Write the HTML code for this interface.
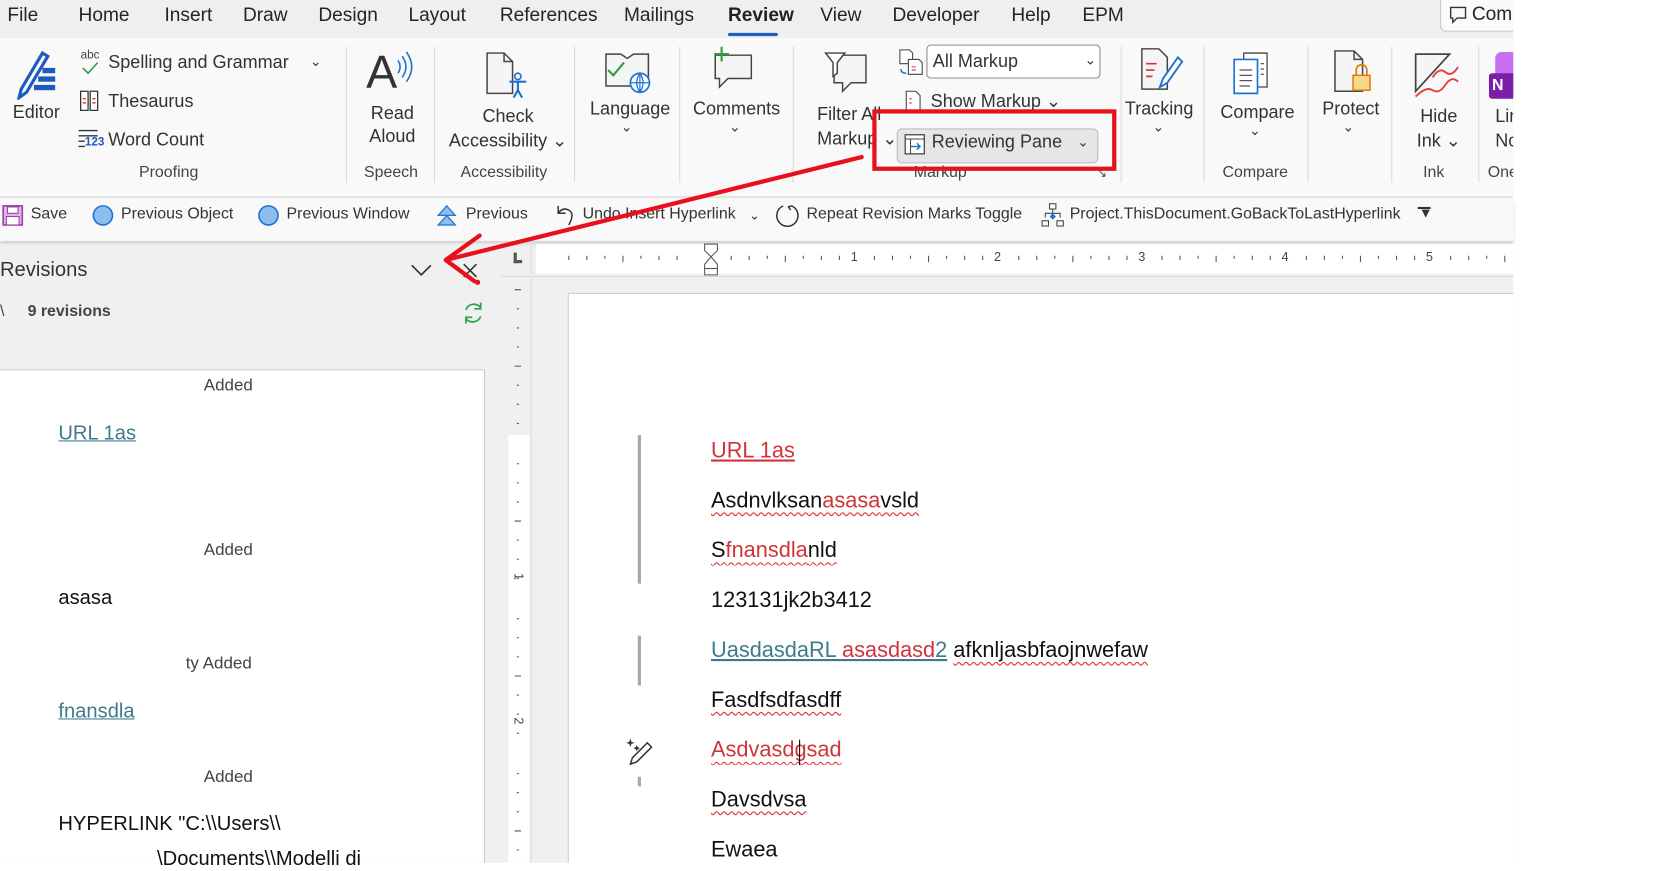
<!DOCTYPE html>
<html><head><meta charset="utf-8">
<style>
*{box-sizing:border-box;margin:0;padding:0}
body{width:1664px;height:862px;position:relative;overflow:hidden;background:#fff;font-family:"Liberation Sans",sans-serif;color:#242424}
#w{position:absolute;left:0;top:0;width:1568px;height:813px;transform:scale(1.0612);transform-origin:0 0}
.a{position:absolute;white-space:nowrap}
.tab{font-size:18px;top:4px;color:#242424}
.lbl{font-size:16px;color:#333}
.gl{font-size:15px;color:#444;top:154px}
.sep{position:absolute;top:44px;width:1px;height:128px;background:#dadada}
.q{font-size:15px;top:193px;color:#333}
.doc{font-size:20.5px;color:#111}
.red{color:#d13438}
.ul{text-decoration:underline}
.wv{text-decoration:underline wavy #e03030;text-decoration-thickness:1px;text-underline-offset:4px}
</style></head><body><div id="w">
<div class="a" style="left:0;top:0;width:1426px;height:813px;background:#f0f0f0"></div>
<!-- tab bar -->
<div class="a" style="left:0;top:0;width:1426px;height:36px;background:#efefef"></div>
<div class="a tab" style="left:7px">File</div>
<div class="a tab" style="left:74px">Home</div>
<div class="a tab" style="left:155px">Insert</div>
<div class="a tab" style="left:229px">Draw</div>
<div class="a tab" style="left:300px">Design</div>
<div class="a tab" style="left:385px">Layout</div>
<div class="a tab" style="left:471px">References</div>
<div class="a tab" style="left:588px">Mailings</div>
<div class="a tab" style="left:686px;font-weight:bold;color:#222">Review</div>
<div class="a" style="left:686px;top:31px;width:47px;height:3px;background:#1f5fbf;border-radius:2px"></div>
<div class="a tab" style="left:773px">View</div>
<div class="a tab" style="left:841px">Developer</div>
<div class="a tab" style="left:953px">Help</div>
<div class="a tab" style="left:1020px">EPM</div>
<div class="a" style="left:1357px;top:0;width:69px;height:30px;border:1px solid #c6c6c6;border-top:none;border-right:none;border-radius:0 0 0 6px;background:#fafafa"></div>
<svg class="a" style="left:1364px;top:4px" width="20" height="20"><path d="M3 3h14v10H9l-4 4v-4H3z" fill="none" stroke="#333" stroke-width="1.3"/></svg>
<div class="a" style="left:1387px;top:3px;font-size:18px;width:39px;overflow:hidden">Comm</div>
<!-- ribbon -->
<div class="a" style="left:0;top:36px;width:1426px;height:150px;background:#f9f9f9;border-bottom:1px solid #d8d8d8"></div>
<svg class="a" style="left:10px;top:46px" width="50" height="48"><path d="M30 4l-20 34-2 8 7-5 20-34z" fill="#fff" stroke="#1e5bbf" stroke-width="3"/><rect x="30" y="18" width="12" height="5" fill="#1e5bbf"/><rect x="26" y="26" width="16" height="5" fill="#1e5bbf"/><rect x="22" y="34" width="20" height="5" fill="#1e5bbf"/></svg>
<div class="a lbl" style="left:12px;top:96px;font-size:17px">Editor</div>
<div class="a" style="left:76px;top:46px;font-size:11px;color:#444">abc</div>
<svg class="a" style="left:76px;top:57px" width="18" height="14"><path d="M2 7l5 5 9-10" fill="none" stroke="#2e9e44" stroke-width="1.5"/></svg>
<div class="a lbl" style="left:102px;top:49px;font-size:17px">Spelling and Grammar</div>
<div class="a lbl" style="left:292px;top:50px;font-size:13px">&#8964;</div>
<svg class="a" style="left:74px;top:84px" width="20" height="22"><path d="M2 2h7v18H2zM11 2h7v18h-7z" fill="#fff" stroke="#333" stroke-width="1.2"/><path d="M4 9h3M13 9h3M4 13h3M13 13h3" stroke="#d33" stroke-width="1.3"/></svg>
<div class="a lbl" style="left:102px;top:86px;font-size:17px">Thesaurus</div>
<svg class="a" style="left:72px;top:121px" width="26" height="22"><path d="M2 2h18M2 7h18M2 12h6M2 17h6" stroke="#333" stroke-width="1.3"/></svg>
<div class="a" style="left:80px;top:128px;font-size:11px;color:#1e5bbf;font-weight:bold">123</div>
<div class="a lbl" style="left:102px;top:122px;font-size:17px">Word Count</div>
<div class="a gl" style="left:131px">Proofing</div>
<div class="sep" style="left:326px"></div>
<div class="a" style="left:345px;top:44px;font-size:44px;color:#333">A</div>
<svg class="a" style="left:372px;top:48px" width="18" height="30"><path d="M3 9q4 6 0 12M7 5q7 10 0 20M11 1q10 14 0 28" fill="none" stroke="#1e73d2" stroke-width="1.5"/></svg>
<div class="a lbl" style="left:348px;top:96px;font-size:17px;text-align:center;line-height:22px">Read<br>Aloud</div>
<div class="a gl" style="left:343px">Speech</div>
<div class="sep" style="left:409px"></div>
<svg class="a" style="left:456px;top:48px" width="44" height="46"><path d="M3 2h16l8 8v30H3z" fill="#f5f5f5" stroke="#444" stroke-width="1.4"/><path d="M19 2v8h8" fill="none" stroke="#444" stroke-width="1.4"/><circle cx="32" cy="24" r="3" fill="none" stroke="#1e73d2" stroke-width="1.5"/><path d="M24 29h16M32 29v8l-4 7M32 37l4 7" fill="none" stroke="#1e73d2" stroke-width="2"/></svg>
<div class="a lbl" style="left:423px;top:98px;font-size:17px;text-align:center;line-height:23px">Check<br>Accessibility &#8964;</div>
<div class="a gl" style="left:434px">Accessibility</div>
<div class="sep" style="left:541px"></div>
<svg class="a" style="left:568px;top:48px" width="48" height="44"><path d="M3 3h14l6 4 6-4h14v30H3z" fill="#f5f5f5" stroke="#444" stroke-width="1.4"/><path d="M5 18l5 5 10-12" fill="none" stroke="#2e9e44" stroke-width="2"/><circle cx="35" cy="30" r="9" fill="#fff" stroke="#1e73d2" stroke-width="1.6"/><path d="M26 30h18M35 21v18M35 21q-6 9 0 18q6-9 0-18" fill="none" stroke="#1e73d2" stroke-width="1.2"/></svg>
<div class="a lbl" style="left:556px;top:93px;font-size:17px">Language</div>
<div class="a lbl" style="left:585px;top:112px;font-size:13px">&#8964;</div>
<div class="sep" style="left:640px"></div>
<svg class="a" style="left:668px;top:42px" width="48" height="44"><path d="M6 10h34v22H18l-8 8v-8H6z" fill="#f5f5f5" stroke="#444" stroke-width="1.4"/><path d="M12 2v14M5 9h14" stroke="#2e9e44" stroke-width="2"/></svg>
<div class="a lbl" style="left:653px;top:93px;font-size:17px">Comments</div>
<div class="a lbl" style="left:687px;top:112px;font-size:13px">&#8964;</div>
<div class="sep" style="left:747px"></div>
<svg class="a" style="left:776px;top:44px" width="48" height="46"><path d="M10 8h30v26H26l-8 8v-8h-8z" fill="#f5f5f5" stroke="#444" stroke-width="1.4"/><path d="M2 6h18l-7 9v10l-4 3V15z" fill="#fff" stroke="#444" stroke-width="1.4"/></svg>
<div class="a lbl" style="left:770px;top:96px;font-size:17px;line-height:23px">Filter All<br>Markup &#8964;</div>
<svg class="a" style="left:846px;top:45px" width="26" height="28"><path d="M2 2h9l3 3v10H2z" fill="#fff" stroke="#444" stroke-width="1"/><path d="M10 11h10l3 3v11H10z" fill="#fff" stroke="#444" stroke-width="1"/><path d="M13 18h4M13 21h4" stroke="#d33"/><path d="M3 20q0 4 5 4" fill="none" stroke="#1e73d2" stroke-width="1.4"/></svg>
<div class="a" style="left:873px;top:42px;width:164px;height:32px;border:1px solid #8a8a8a;border-radius:4px;background:#fff"></div>
<div class="a lbl" style="left:879px;top:48px;font-size:17px">All Markup</div>
<div class="a lbl" style="left:1022px;top:49px;font-size:13px">&#8964;</div>
<svg class="a" style="left:852px;top:84px" width="18" height="22"><path d="M2 2h9l4 4v14H2z" fill="#fff" stroke="#444" stroke-width="1"/><path d="M5 9h2M5 13h2" stroke="#d33" stroke-width="1.3"/></svg>
<div class="a lbl" style="left:877px;top:86px;font-size:17px">Show Markup &#8964;</div>
<div class="a" style="left:845px;top:121px;width:190px;height:33px;background:#e6e6e6;border:1px solid #bdbdbd;border-radius:5px"></div>
<svg class="a" style="left:851px;top:125px" width="22" height="22"><rect x="2" y="2" width="18" height="18" fill="#fff" stroke="#444" stroke-width="1.2"/><path d="M2 6h18M7 6v14" stroke="#444" stroke-width="1"/><path d="M7 13h9M13 10l3 3-3 3" fill="none" stroke="#1e73d2" stroke-width="1.4"/></svg>
<div class="a lbl" style="left:878px;top:124px;font-size:17px">Reviewing Pane</div>
<div class="a lbl" style="left:1015px;top:126px;font-size:13px">&#8964;</div>
<div class="a gl" style="left:861px;top:154px">Markup</div>
<div class="a" style="left:1034px;top:157px;font-size:11px;color:#444">&#8600;</div>
<div class="sep" style="left:1056px"></div>
<svg class="a" style="left:1072px;top:44px" width="46" height="46"><path d="M4 2h16l8 8v30H4z" fill="#f5f5f5" stroke="#444" stroke-width="1.4"/><path d="M8 16h10M8 22h8M8 28h6" stroke="#d33" stroke-width="1.6"/><path d="M38 10l-14 20-3 8 7-4 14-20z" fill="#fff" stroke="#1e73d2" stroke-width="1.8"/></svg>
<div class="a lbl" style="left:1060px;top:93px;font-size:17px">Tracking</div>
<div class="a lbl" style="left:1086px;top:112px;font-size:13px">&#8964;</div>
<div class="sep" style="left:1134px"></div>
<svg class="a" style="left:1160px;top:48px" width="46" height="44"><path d="M12 2h22v32H12z" fill="#fff" stroke="#444" stroke-width="1.2"/><path d="M3 8h22v32H3z" fill="#fff" stroke="#1e73d2" stroke-width="1.6"/><path d="M8 18h12M8 23h12M8 28h12M8 33h10M28 12h3M28 17h3M28 22h3" stroke="#555" stroke-width="1.2"/></svg>
<div class="a lbl" style="left:1150px;top:96px;font-size:17px">Compare</div>
<div class="a lbl" style="left:1177px;top:115px;font-size:13px">&#8964;</div>
<div class="a gl" style="left:1152px">Compare</div>
<div class="sep" style="left:1232px"></div>
<svg class="a" style="left:1255px;top:45px" width="46" height="50"><path d="M3 3h18l8 8v30H3z" fill="#f5f5f5" stroke="#444" stroke-width="1.4"/><path d="M21 3v8h8" fill="none" stroke="#444" stroke-width="1.4"/><path d="M23 26v-5a5 5 0 0 1 10 0v5" fill="none" stroke="#e07b00" stroke-width="1.6"/><rect x="20" y="26" width="16" height="14" fill="#f7d88a" stroke="#e07b00" stroke-width="1.4"/></svg>
<div class="a lbl" style="left:1246px;top:93px;font-size:17px">Protect</div>
<div class="a lbl" style="left:1265px;top:112px;font-size:13px">&#8964;</div>
<div class="sep" style="left:1311px"></div>
<svg class="a" style="left:1330px;top:48px" width="48" height="46"><path d="M4 3h32L4 38z" fill="#f5f5f5" stroke="#444" stroke-width="1.6"/><path d="M20 25q6-10 12-5t12-5M4 43q10-10 16-6t12-5t12-3" fill="none" stroke="#e84040" stroke-width="1.8"/></svg>
<div class="a lbl" style="left:1335px;top:98px;font-size:17px;line-height:23px;text-align:center">Hide<br>Ink &#8964;</div>
<div class="a gl" style="left:1341px">Ink</div>
<div class="sep" style="left:1393px"></div>
<div class="a" style="left:1403px;top:49px;width:23px;height:46px;overflow:hidden"><div style="position:absolute;left:6px;top:0;width:30px;height:40px;background:#c76ff0;border-radius:6px"></div><div style="position:absolute;left:0;top:20px;width:26px;height:24px;background:#7a1fa8;border-radius:3px;color:#fff;font-weight:bold;font-size:15px;padding:3px 0 0 3px">N</div></div>
<div class="a lbl" style="left:1409px;top:98px;font-size:17px;line-height:23px;width:17px;overflow:hidden">Lin<br>No</div>
<div class="a gl" style="left:1402px;width:24px;overflow:hidden">One</div>
<!-- QAT -->
<div class="a" style="left:0;top:187px;width:1426px;height:40px;background:#f9f9f9;box-shadow:0 3px 4px rgba(0,0,0,.12)"></div>
<svg class="a" style="left:1px;top:192px" width="22" height="22"><rect x="2" y="2" width="18" height="18" fill="#e3b6e8" stroke="#9b3fa6" stroke-width="1.5"/><rect x="6" y="3" width="10" height="6" fill="#fff" stroke="#9b3fa6"/><rect x="5" y="12" width="12" height="8" fill="#fff" stroke="#9b3fa6"/></svg>
<div class="a q" style="left:29px">Save</div>
<svg class="a" style="left:86px;top:192px" width="22" height="22"><circle cx="11" cy="11" r="9" fill="#8cbef0" stroke="#1e73d2" stroke-width="1.5"/></svg>
<div class="a q" style="left:114px">Previous Object</div>
<svg class="a" style="left:242px;top:192px" width="22" height="22"><circle cx="11" cy="11" r="9" fill="#8cbef0" stroke="#1e73d2" stroke-width="1.5"/></svg>
<div class="a q" style="left:270px">Previous Window</div>
<svg class="a" style="left:410px;top:192px" width="22" height="22"><path d="M11 2l8 9H3zM11 11l8 9H3z" fill="#8cbef0" stroke="#1e73d2" stroke-width="1.2"/></svg>
<div class="a q" style="left:439px">Previous</div>
<svg class="a" style="left:520px;top:191px" width="24" height="24"><path d="M6 3v7h7M6 10q4-6 10-3t0 14" fill="none" stroke="#333" stroke-width="1.4"/></svg>
<div class="a q" style="left:549px">Undo Insert Hyperlink</div>
<div class="a q" style="left:706px;font-size:12px;top:196px">&#8964;</div>
<svg class="a" style="left:729px;top:190px" width="26" height="26"><path d="M9 4a10 10 0 1 0 8 0M17 4l-3 1 2 3" fill="none" stroke="#333" stroke-width="1.4"/></svg>
<div class="a q" style="left:760px">Repeat Revision Marks Toggle</div>
<svg class="a" style="left:980px;top:191px" width="24" height="24"><rect x="9" y="1" width="6" height="5" fill="none" stroke="#444"/><path d="M12 6v4M5 14v-4h14v4M12 10v3" stroke="#444" fill="none"/><path d="M12 10l3 3-3 3-3-3z" fill="#1e73d2"/><rect x="2" y="17" width="6" height="5" fill="none" stroke="#444"/><rect x="16" y="17" width="6" height="5" fill="none" stroke="#444"/></svg>
<div class="a q" style="left:1008px">Project.ThisDocument.GoBackToLastHyperlink</div>
<div class="a" style="left:1337px;top:193px;font-size:13px;color:#333">&#9660;</div>
<div class="a" style="left:1336px;top:195px;width:12px;height:1.5px;background:#333"></div>
<!-- revisions pane -->
<div class="a" style="left:0;top:230px;width:472px;height:583px;background:#f0f0f0"></div>
<div class="a" style="left:0;top:244px;font-size:19px;color:#333">Revisions</div>
<svg class="a" style="left:386px;top:248px" width="22" height="14"><path d="M2 2l9 9 9-9" fill="none" stroke="#333" stroke-width="1.6"/></svg>
<svg class="a" style="left:434px;top:246px" width="18" height="18"><path d="M3 3l12 12M15 3L3 15" stroke="#333" stroke-width="1.5"/></svg>
<div class="a" style="left:0;top:285px;font-size:15px;color:#444">\</div>
<div class="a" style="left:26px;top:285px;font-size:15px;color:#444;font-weight:bold">9 revisions</div>
<svg class="a" style="left:433px;top:282px" width="26" height="26"><path d="M20 8a8 8 0 0 0-14 2M6 18a8 8 0 0 0 14-2" fill="none" stroke="#2ea24a" stroke-width="1.6"/><path d="M20 3v6h-6M6 23v-6h6" fill="none" stroke="#2ea24a" stroke-width="1.6"/></svg>
<div class="a" style="left:0;top:348px;width:457px;height:465px;background:#fff;border:1px solid #c8c8c8;border-left:none;border-bottom:none"></div>
<div class="a" style="left:192px;top:355px;font-size:16px;color:#444">Added</div>
<div class="a ul" style="left:55px;top:398px;font-size:19px;color:#3f7a8c">URL 1as</div>
<div class="a" style="left:192px;top:510px;font-size:16px;color:#444">Added</div>
<div class="a" style="left:55px;top:553px;font-size:19px;color:#111">asasa</div>
<div class="a" style="left:175px;top:617px;font-size:16px;color:#444">ty Added</div>
<div class="a ul" style="left:55px;top:660px;font-size:19px;color:#3f7a8c">fnansdla</div>
<div class="a" style="left:192px;top:724px;font-size:16px;color:#444">Added</div>
<div class="a" style="left:55px;top:766px;font-size:19px;color:#111">HYPERLINK "C:\\Users\\</div>
<div class="a" style="left:148px;top:799px;font-size:19px;color:#111">\Documents\\Modelli di</div>
<!-- rulers -->
<div class="a" style="left:477px;top:232px;width:24px;height:26px;background:#f0f0f0;border-right:1px solid #ddd"></div>
<div class="a" style="left:484px;top:238px;width:8px;height:10px;border-left:3px solid #555;border-bottom:3px solid #555"></div>
<div class="a" style="left:505px;top:230px;width:921px;height:28px;background:#fff"></div>
<div class="a" style="left:472px;top:260px;width:954px;height:1px;background:#d8d8d8"></div>
<svg class="a" style="left:505px;top:226px" width="921" height="36">
<g stroke="#555" stroke-width="1">
<path d="M31 15v4M48 15v4M65 15v3M82 15v6M99 15v3M116 15v4M133 15v4M184 15v4M201 15v4M218 15v3M235 15v6M252 15v3M269 15v4M286 15v4M319 15v4M336 15v4M353 15v3M370 15v6M387 15v3M404 15v4M421 15v4M455 15v4M472 15v4M489 15v3M506 15v6M523 15v3M540 15v4M557 15v4M590 15v4M607 15v4M624 15v3M641 15v6M658 15v3M675 15v4M692 15v4M726 15v4M743 15v4M760 15v3M777 15v6M794 15v3M811 15v4M828 15v4M862 15v4M879 15v4M896 15v3M913 15v6"/>
</g>
<g font-family="Liberation Sans" font-size="12" fill="#444" text-anchor="middle"><text x="300" y="20">1</text><text x="435" y="20">2</text><text x="571" y="20">3</text><text x="706" y="20">4</text><text x="842" y="20">5</text></g>
<path d="M159 4h12v6l-6 6-6-6z" fill="#fff" stroke="#555"/><path d="M165 16l6 7v10h-12V23z" fill="#fff" stroke="#555"/><path d="M159 27h12" stroke="#555"/>
</svg>
<div class="a" style="left:477px;top:262px;width:24px;height:551px;background:#f0f0f0;border-right:1px solid #ddd"></div>
<div class="a" style="left:479px;top:410px;width:20px;height:403px;background:#fff"></div>
<svg class="a" style="left:477px;top:262px" width="24" height="551"><g stroke="#555"><path d="M8 11h6M10 29h2M10 47h2M10 65h2M8 83h6M10 101h2M10 119h2M10 137h2M10 175h2M10 193h2M10 211h2M8 229h6M10 247h2M10 265h2M10 283h2M10 321h2M10 339h2M10 357h2M8 375h6M10 393h2M10 411h2M10 429h2M10 467h2M10 485h2M10 503h2M8 521h6M10 539h2"/></g><g font-family="Liberation Sans" font-size="12" fill="#444"><text x="6" y="288" transform="rotate(90 12 284)">1</text><text x="6" y="424" transform="rotate(90 12 420)">2</text></g></svg>
<!-- page -->
<div class="a" style="left:535px;top:276px;width:891px;height:537px;background:#fff;border-left:1px solid #ccc;border-top:1px solid #ccc"></div>
<div class="a" style="left:601px;top:410px;width:3px;height:140px;background:#a8a8a8"></div>
<div class="a" style="left:601px;top:599px;width:3px;height:47px;background:#a8a8a8"></div>
<div class="a" style="left:601px;top:732px;width:3px;height:9px;background:#a8a8a8"></div>
<div class="a doc red ul" style="left:670px;top:413px">URL 1as</div>
<div class="a doc" style="left:670px;top:460px"><span class="wv">Asdnvlksan<span class="red">asasa</span>vsld</span></div>
<div class="a doc" style="left:670px;top:507px"><span class="wv">S<span class="red">fnansdla</span>nld</span></div>
<div class="a doc" style="left:670px;top:554px">123131jk2b3412</div>
<div class="a doc" style="left:670px;top:601px"><span style="color:#3f7a8c;text-decoration:underline">UasdasdaRL <span class="red">asasdasd</span>2</span> <span class="wv">afknljasbfaojnwefaw</span></div>
<div class="a doc" style="left:670px;top:648px"><span class="wv">Fasdfsdfasdff</span></div>
<svg class="a" style="left:588px;top:694px" width="28" height="30"><path d="M6 2l1 3 3 1-3 1-1 3-1-3-3-1 3-1zM12 8l1 2 2 1-2 1-1 2-1-2-2-1 2-1z" fill="#333"/><path d="M22 6l4 4-14 14-6 2 2-6z" fill="none" stroke="#333" stroke-width="1.4"/></svg>
<div class="a doc red" style="left:670px;top:695px"><span class="wv ul">Asdvasdgsad</span></div>
<div class="a" style="left:753px;top:697px;width:1px;height:24px;background:#000"></div>
<div class="a doc" style="left:670px;top:742px"><span class="wv">Davsdvsa</span></div>
<div class="a doc" style="left:670px;top:789px">Ewaea</div>
<!-- annotations -->
<svg class="a" style="left:0;top:0" width="1568" height="813">
<rect x="824" y="105" width="226" height="54" fill="none" stroke="#e8101a" stroke-width="4"/>
<path d="M812 148L420 245M420 245l32-23M420 245l27 20" fill="none" stroke="#e8101a" stroke-width="4" stroke-linecap="round"/>
<circle cx="450" cy="266" r="2.5" fill="#e8101a"/>
</svg>
</div></body></html>
